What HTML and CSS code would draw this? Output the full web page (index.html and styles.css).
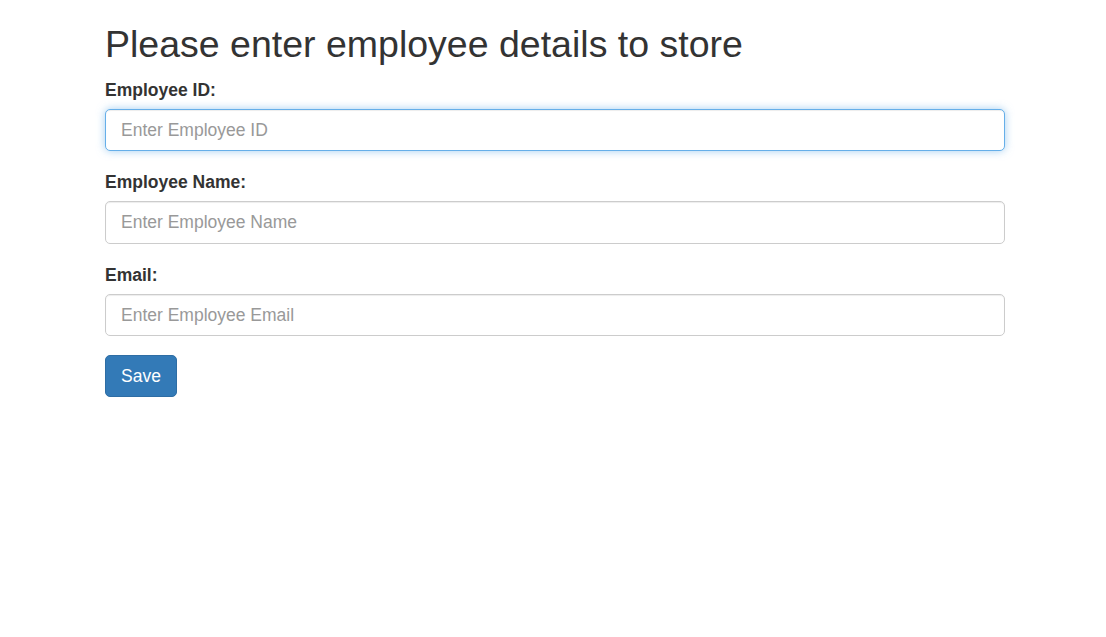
FILE: index.html
```html
<!DOCTYPE html>
<html lang="en">
<head>
    <meta charset="UTF-8">
    <meta name="viewport" content="width=device-width, initial-scale=1.0">
    <title>Employee Details</title>
    <link rel="stylesheet" href="styles.css">
</head>
<body>
    <div class="container">
        <h2>Please enter employee details to store</h2>
        <form id="employee-form">
            <div class="form-group">
                <label for="emp-id">Employee ID:</label>
                <input type="text" class="form-control is-focused" id="emp-id" placeholder="Enter Employee ID" autofocus>
            </div>
            <div class="form-group">
                <label for="emp-name">Employee Name:</label>
                <input type="text" class="form-control" id="emp-name" placeholder="Enter Employee Name">
            </div>
            <div class="form-group">
                <label for="emp-email">Email:</label>
                <input type="email" class="form-control" id="emp-email" placeholder="Enter Employee Email">
            </div>
            <button type="submit" class="btn btn-primary">Save</button>
        </form>
    </div>
</body>
</html>
```

FILE: styles.css
```css
body {
    font-family: 'Liberation Sans', Arial, sans-serif;
    font-size: 17.5px;
    line-height: 1.42857;
    color: #333;
    background-color: #fff;
    margin: 0;
}

.container {
    width: 900px;
    margin-left: 105px;
}

h2 {
    font-size: 37.5px;
    font-weight: 500;
    line-height: 1.1;
    margin: 24px 0 12.5px;
}

.form-group {
    margin-bottom: 18.75px;
}

label {
    display: inline-block;
    margin-bottom: 6.25px;
    font-weight: bold;
}

.form-control {
    display: block;
    width: 100%;
    height: 42.5px;
    padding: 7.5px 15px;
    font-family: inherit;
    font-size: 17.5px;
    line-height: 1.42857;
    color: #555;
    background-color: #fff;
    border: 1px solid #ccc;
    border-radius: 5px;
    box-shadow: inset 0 1px 1px rgba(0, 0, 0, 0.075);
    box-sizing: border-box;
    margin: 0;
}

.form-control::placeholder {
    color: #999;
}

.form-control:focus,
.form-control.is-focused {
    border-color: #66afe9;
    outline: 0;
    box-shadow: inset 0 1px 1px rgba(0, 0, 0, 0.075), 0 0 8px rgba(102, 175, 233, 0.6);
}

.btn {
    display: inline-block;
    padding: 7.5px 15px;
    font-family: inherit;
    font-size: 17.5px;
    line-height: 1.42857;
    border: 1px solid transparent;
    border-radius: 5px;
    cursor: pointer;
    margin: 0;
}

.btn-primary {
    color: #fff;
    background-color: #337ab7;
    border-color: #2e6da4;
}

.btn-primary:hover {
    background-color: #286090;
}
```
